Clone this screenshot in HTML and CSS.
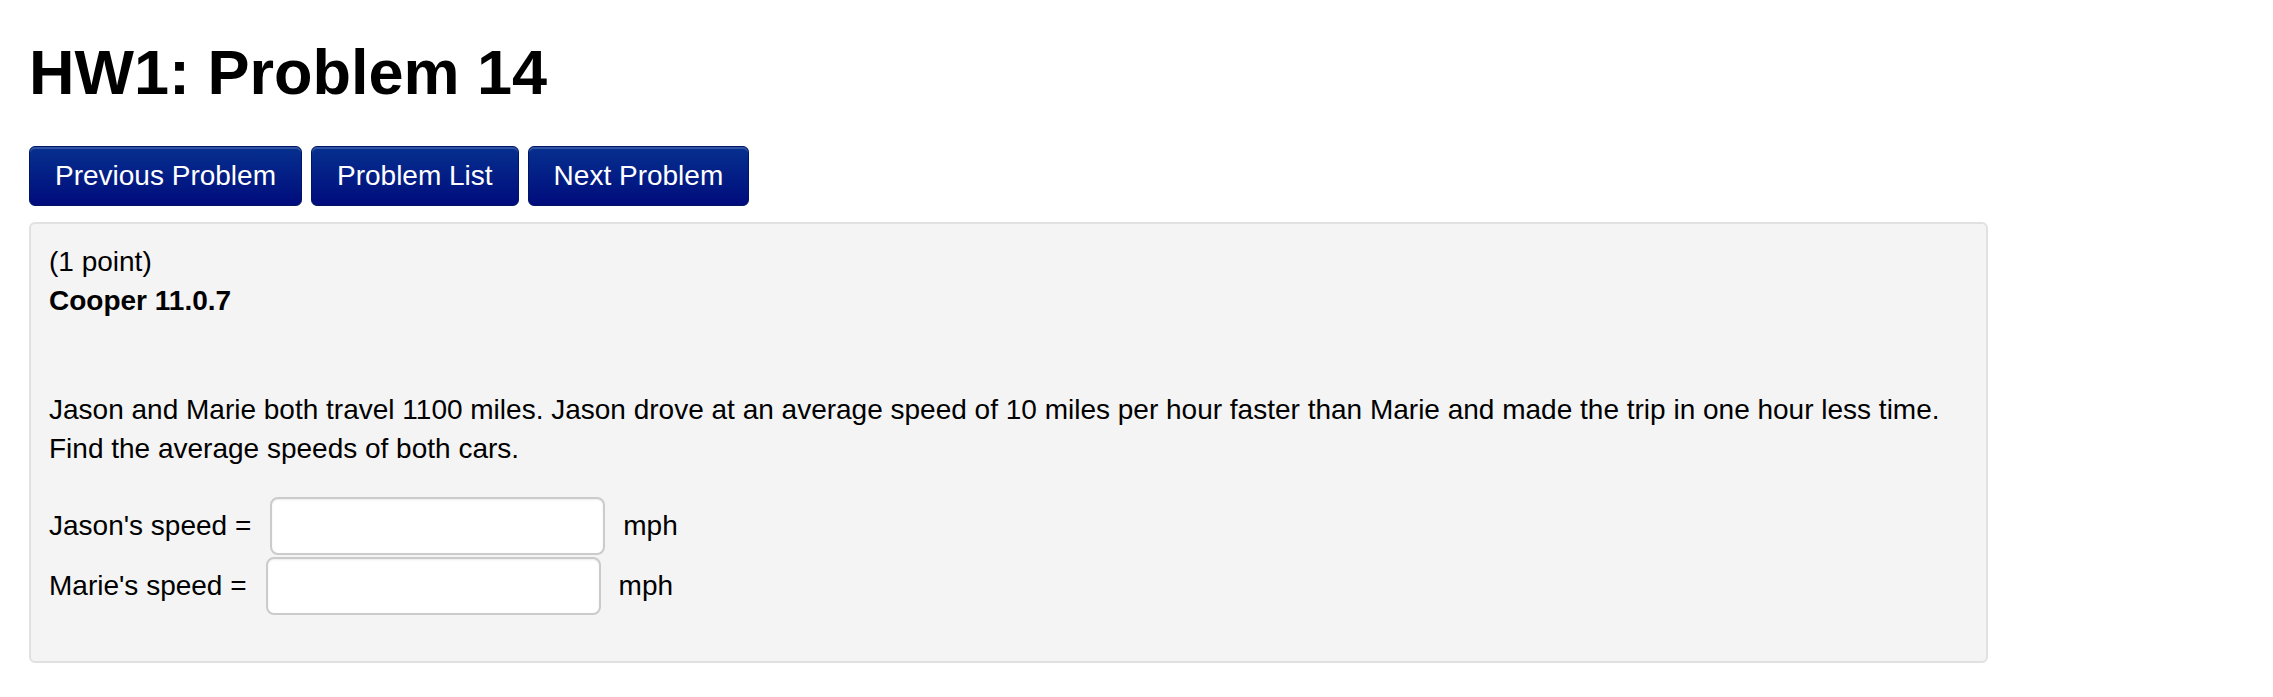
FILE: index.html
```html
<!DOCTYPE html>
<html lang="en">
<head>
    <meta charset="utf-8">
    <title>HW1: Problem 14</title>
    <link rel="stylesheet" href="styles.css">
</head>

<body>
    <h1 class="page-title">HW1: Problem 14</h1>

    <nav class="problem-nav">
        <a class="nav-btn" href="#">Previous Problem</a>
        <a class="nav-btn" href="#">Problem List</a>
        <a class="nav-btn" href="#">Next Problem</a>
    </nav>

    <main class="problem">
        <div class="problem-head">
            <div>(1 point)</div>
            <div class="problem-name">Cooper 11.0.7</div>
        </div>

        <p class="problem-text">Jason and Marie both travel 1100 miles. Jason drove at an average speed of 10 miles per hour faster than Marie and made the trip in one hour less time. Find the average speeds of both cars.</p>

        <div class="answers">
            <div class="answer-row">
                <label for="ans-jason">Jason's speed =</label>
                <input type="text" id="ans-jason" class="answer">
                <span>mph</span>
            </div>
            <div class="answer-row">
                <label for="ans-marie">Marie's speed =</label>
                <input type="text" id="ans-marie" class="answer">
                <span>mph</span>
            </div>
        </div>
    </main>
</body>
</html>
```

FILE: styles.css
```css
body {
    margin: 0;
    padding: 0 29px;
    background-color: #fff;
    color: #000;
    font-family: "Liberation Sans", Arial, sans-serif;
    font-size: 28px;
    line-height: 39px;
}

.page-title {
    margin: 35px 0 0;
    font-size: 63px;
    line-height: 1.2;
    font-weight: bold;
}

.problem-nav {
    display: flex;
    gap: 9px;
    margin-top: 35px;
}

.nav-btn {
    display: block;
    padding: 14px 25px;
    font-size: 28px;
    line-height: 30px;
    color: #fff;
    text-decoration: none;
    background: linear-gradient(#06308f, #000c7c);
    border: 1px solid #001566;
    border-radius: 6px;
    box-shadow: inset 0 2px 0 rgba(255, 255, 255, 0.18);
}

.problem {
    width: 1959px;
    box-sizing: border-box;
    margin-top: 16px;
    padding: 18px 18px 45px;
    background-color: #f4f4f4;
    border: 2px solid #e1e1e1;
    border-radius: 6px;
}

.problem-name {
    font-weight: bold;
}

.problem-text {
    margin: 70px 0 0;
}

.answers {
    margin-top: 28px;
}

.answer-row {
    display: flex;
    align-items: center;
    height: 60px;
}

.answer-row label {
    margin-right: 19px;
}

.answer {
    width: 335px;
    height: 58px;
    box-sizing: border-box;
    margin-right: 18px;
    border: 2px solid #cbcbcb;
    border-radius: 8px;
    background: #fff;
    box-shadow: inset 0 1px 2px rgba(0, 0, 0, 0.08);
    font: inherit;
}
```
